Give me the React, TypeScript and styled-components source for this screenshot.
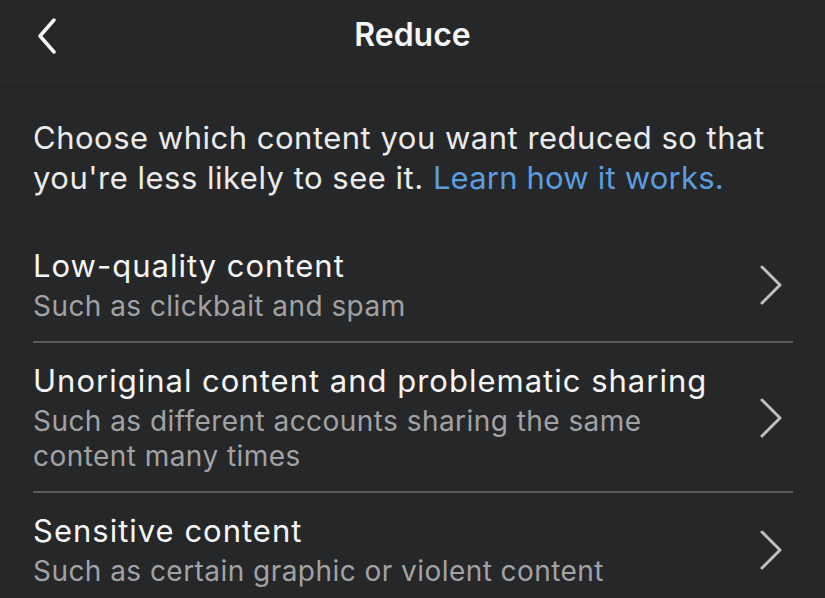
import React from 'react'
import styled, { createGlobalStyle } from 'styled-components'

const GlobalStyle = createGlobalStyle`
  html, body {
    margin: 0;
    padding: 0;
    background: #262729;
  }
  body {
    font-family: Inter, "Noto Sans", sans-serif;
    -webkit-font-smoothing: antialiased;
  }
`

const Screen = styled.div`
  width: 825px;
  height: 598px;
  overflow: hidden;
  background: #262729;
  color: #ececec;
`

const Header = styled.header`
  height: 86px;
  display: grid;
  grid-template-columns: 80px 1fr 80px;
  align-items: start;
  border-bottom: 1px solid #202123;
`

const BackButton = styled.button`
  background: none;
  border: 0;
  padding: 18px 0 0 36px;
  display: flex;
  cursor: pointer;
`

const Title = styled.h1`
  margin: 0;
  padding-top: 15px;
  text-align: center;
  font-size: 32px;
  line-height: 40px;
  font-weight: 600;
  color: #f6f6f6;
  letter-spacing: 0;
`

const Body = styled.main`
  padding: 31px 32px 0 33px;
`

const Intro = styled.p`
  margin: 0 0 30px;
  font-size: 31px;
  line-height: 40px;
  font-weight: 400;
  color: #ebebeb;
  letter-spacing: 0.5px;
`

const Link = styled.a`
  color: #5b9ddf;
  text-decoration: none;
  letter-spacing: 0.2px;
`

const List = styled.ul`
  list-style: none;
  margin: 0;
  padding: 0;
`

const Row = styled.li<{ $last?: boolean }>`
  display: flex;
  align-items: center;
  gap: 20px;
  padding: 18px 10px 17px 0;
  border-bottom: ${p => (p.$last ? 'none' : '2px solid #58595b')};
`

const RowText = styled.div`
  flex: 1;
  min-width: 0;
`

const RowTitle = styled.div`
  font-size: 31px;
  line-height: 40px;
  font-weight: 400;
  color: #f5f5f5;
  letter-spacing: 1px;
`

const RowSub = styled.div`
  margin-top: 3px;
  max-width: 680px;
  font-size: 28px;
  line-height: 35px;
  color: #a2a2a4;
  letter-spacing: 0.45px;
`

const Chevron = styled.svg`
  flex: none;
  width: 24px;
  height: 42px;
`

const items = [
  { title: 'Low-quality content', sub: 'Such as clickbait and spam' },
  {
    title: 'Unoriginal content and problematic sharing',
    sub: 'Such as different accounts sharing the same content many times',
  },
  { title: 'Sensitive content', sub: 'Such as certain graphic or violent content' },
]

const App: React.FC = () => (
  <Screen>
    <GlobalStyle />
    <Header>
      <BackButton aria-label="Back">
        <svg width="22" height="36" viewBox="0 0 22 36">
          <path
            d="M18 2 L4 18 L18 34"
            fill="none"
            stroke="#f6f6f6"
            strokeWidth="3.5"
            strokeLinecap="round"
            strokeLinejoin="round"
          />
        </svg>
      </BackButton>
      <Title>Reduce</Title>
      <div />
    </Header>
    <Body>
      <Intro>
        Choose which content you want reduced so that you're less likely to see it.{' '}
        <Link href="#">Learn how it works.</Link>
      </Intro>
      <List>
        {items.map((item, i) => (
          <Row key={item.title} $last={i === items.length - 1}>
            <RowText>
              <RowTitle>{item.title}</RowTitle>
              <RowSub>{item.sub}</RowSub>
            </RowText>
            <Chevron viewBox="0 0 24 42">
              <path
                d="M3 3 L21 21 L3 39"
                fill="none"
                stroke="#bfbfc1"
                strokeWidth="3"
                strokeLinecap="round"
                strokeLinejoin="round"
              />
            </Chevron>
          </Row>
        ))}
      </List>
    </Body>
  </Screen>
)

export default App
